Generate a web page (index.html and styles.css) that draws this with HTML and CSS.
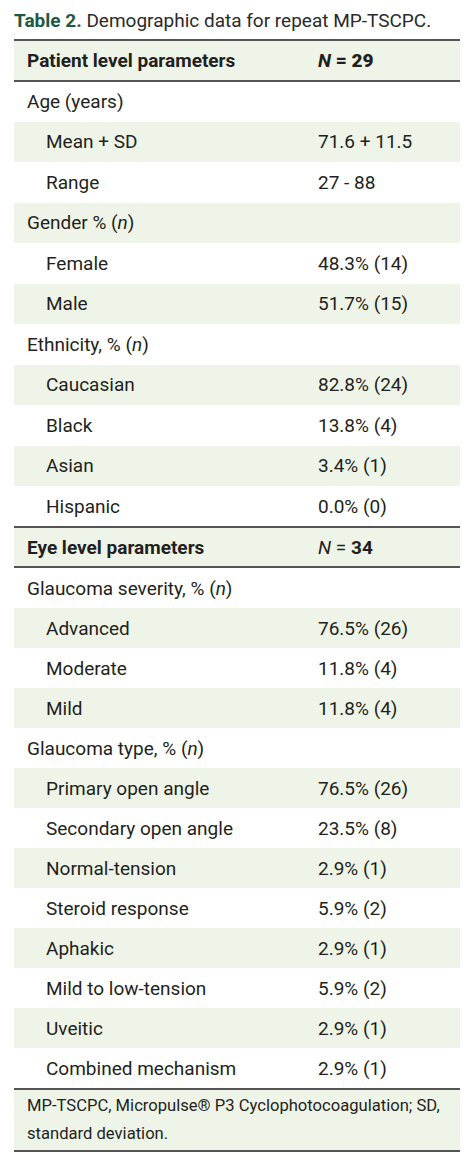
FILE: index.html
```html
<!DOCTYPE html>
<html>
<head>
<meta charset="utf-8">
<link rel="stylesheet" href="styles.css">
</head>
<body>
<div class="wrap">
  <p class="caption"><span class="label">Table 2.</span> Demographic data for repeat MP-TSCPC.</p>
  <table class="data">
    <colgroup><col class="c1"><col class="c2"></colgroup>
    <tbody class="sec1">
      <tr class="head"><td>Patient level parameters</td><td><b><i>N</i> = 29</b></td></tr>
      <tr><td>Age (years)</td><td></td></tr>
      <tr class="g"><td class="sub">Mean + SD</td><td>71.6 + 11.5</td></tr>
      <tr><td class="sub">Range</td><td>27 - 88</td></tr>
      <tr class="g"><td>Gender % (<i>n</i>)</td><td></td></tr>
      <tr><td class="sub">Female</td><td>48.3% (14)</td></tr>
      <tr class="g"><td class="sub">Male</td><td>51.7% (15)</td></tr>
      <tr><td>Ethnicity, % (<i>n</i>)</td><td></td></tr>
      <tr class="g"><td class="sub">Caucasian</td><td>82.8% (24)</td></tr>
      <tr><td class="sub">Black</td><td>13.8% (4)</td></tr>
      <tr class="g"><td class="sub">Asian</td><td>3.4% (1)</td></tr>
      <tr><td class="sub">Hispanic</td><td>0.0% (0)</td></tr>
    </tbody>
    <tbody class="sec2">
      <tr class="head"><td>Eye level parameters</td><td><i>N</i> = <b>34</b></td></tr>
      <tr><td>Glaucoma severity, % (<i>n</i>)</td><td></td></tr>
      <tr class="g"><td class="sub">Advanced</td><td>76.5% (26)</td></tr>
      <tr><td class="sub">Moderate</td><td>11.8% (4)</td></tr>
      <tr class="g"><td class="sub">Mild</td><td>11.8% (4)</td></tr>
      <tr><td>Glaucoma type, % (<i>n</i>)</td><td></td></tr>
      <tr class="g"><td class="sub">Primary open angle</td><td>76.5% (26)</td></tr>
      <tr><td class="sub">Secondary open angle</td><td>23.5% (8)</td></tr>
      <tr class="g"><td class="sub">Normal-tension</td><td>2.9% (1)</td></tr>
      <tr><td class="sub">Steroid response</td><td>5.9% (2)</td></tr>
      <tr class="g"><td class="sub">Aphakic</td><td>2.9% (1)</td></tr>
      <tr><td class="sub">Mild to low-tension</td><td>5.9% (2)</td></tr>
      <tr class="g"><td class="sub">Uveitic</td><td>2.9% (1)</td></tr>
      <tr><td class="sub">Combined mechanism</td><td>2.9% (1)</td></tr>
    </tbody>
    <tbody>
      <tr class="foot"><td colspan="2">MP-TSCPC, Micropulse® P3 Cyclophotocoagulation; SD, standard deviation.</td></tr>
    </tbody>
  </table>
</div>
</body>
</html>
```

FILE: styles.css
```css
html, body {
  margin: 0;
  padding: 0;
  background: #ffffff;
}
body {
  font-family: Roboto, "Liberation Sans", sans-serif;
  color: #231f20;
}
.wrap {
  padding: 8px 14px 0 14px;
}
.caption {
  margin: 0;
  height: 31px;
  font-size: 19px;
  line-height: 26px;
  color: #2a2a2a;
}
.caption .label {
  font-weight: bold;
  color: #1e5944;
}
.data {
  width: 446px;
  table-layout: fixed;
  border-collapse: collapse;
  font-size: 19px;
}
.data col.c1 {
  width: 291px;
}
.data col.c2 {
  width: 155px;
}
.data td {
  padding: 0 0 0 13px;
  height: 40px;
  vertical-align: middle;
  white-space: nowrap;
}
.data td.sub {
  padding-left: 32px;
}
.sec1 tr {
  height: 40.5px;
}
.sec2 tr {
  height: 40px;
}
.data tr.g td {
  background: #eef4e7;
}
.data tr.head td {
  background: #eef4e7;
  font-weight: bold;
  height: 38px;
  border-top: 2px solid #555555;
  border-bottom: 2px solid #555555;
}
.data tr.head td i {
  font-weight: bold;
}
.sec2 tr.head td:last-child {
  font-weight: normal;
}
.sec2 tr.head td:last-child i {
  font-weight: normal;
}
.data tr.foot td {
  background: #eef4e7;
  white-space: normal;
  font-size: 16.6px;
  line-height: 28px;
  padding: 2px 2px 2px 13px;
  height: auto;
  border-top: 2px solid #555555;
  border-bottom: 2px solid #555555;
}
```
